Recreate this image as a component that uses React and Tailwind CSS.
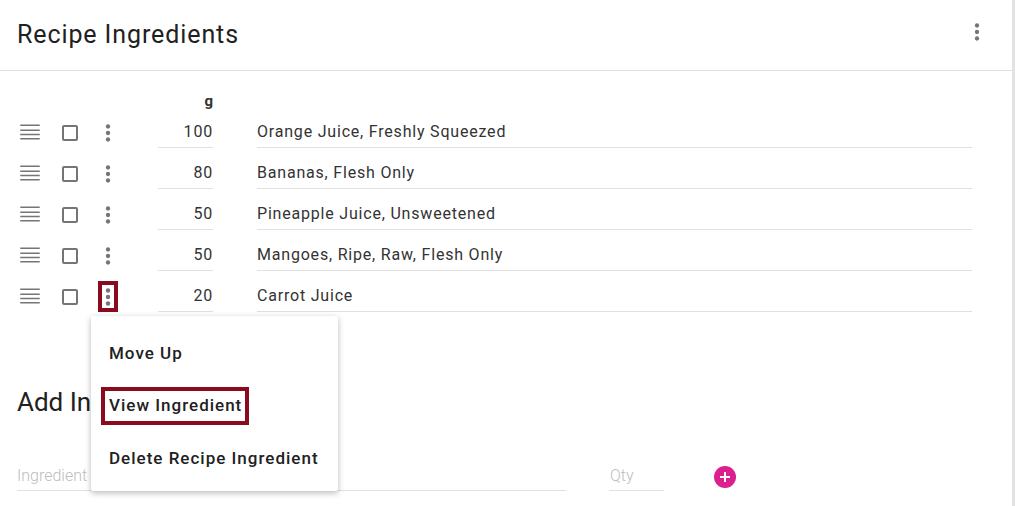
import React from "react";

const rows = [
  { qty: 100, name: "Orange Juice, Freshly Squeezed" },
  { qty: 80, name: "Bananas, Flesh Only" },
  { qty: 50, name: "Pineapple Juice, Unsweetened" },
  { qty: 50, name: "Mangoes, Ripe, Raw, Flesh Only" },
  { qty: 20, name: "Carrot Juice" },
];

const DragIcon = () => (
  <svg width="26" height="26" viewBox="0 0 24 24" fill="#757575">
    <path d="M3 15h18v-1.4H3V15zm0 4h18v-1.4H3V19zm0-8h18V9.6H3V11zm0-6v1.4h18V5H3z" />
  </svg>
);

const Kebab = () => (
  <svg width="26" height="26" viewBox="0 0 24 24" fill="#757575">
    <circle cx="12" cy="6" r="2" />
    <circle cx="12" cy="12" r="2" />
    <circle cx="12" cy="18" r="2" />
  </svg>
);

const Row = ({ qty, name, active }) => (
  <div className="flex h-[41px]">
    <div className="flex items-center pt-[8px]">
      <DragIcon />
    </div>
    <div className="ml-[19px] flex items-center pt-[10px]">
      <div className="h-4 w-4 rounded-[2px] border-2 border-[#757575]" />
    </div>
    <div className="ml-[17px] flex w-[26px] items-center justify-center pt-[10px]">
      {active ? (
        <div className="flex h-[31px] w-[20px] items-center justify-center border-4 border-[#8a0a1e]">
          <svg width="10" height="22" viewBox="0 0 10 22" fill="#757575">
            <circle cx="5" cy="4.5" r="2.2" />
            <circle cx="5" cy="11" r="2.2" />
            <circle cx="5" cy="17.5" r="2.2" />
          </svg>
        </div>
      ) : (
        <Kebab />
      )}
    </div>
    <div className="ml-[37px] flex w-[55px] items-center justify-end border-b border-[#e0e0e0] pt-[9px] text-[16px] leading-[20px] tracking-[0.8px] text-[#333]">
      {qty}
    </div>
    <div className="ml-[44px] flex w-[715px] items-center border-b border-[#e0e0e0] pt-[9px] text-[16px] leading-[20px] tracking-[0.8px] text-[#333]">
      {name}
    </div>
  </div>
);

const App = () => {
  return (
    <div
      className="relative h-[506px] w-[1015px] overflow-hidden bg-white"
      style={{ fontFamily: "Roboto, 'Noto Sans', sans-serif" }}
    >
      <div className="h-full w-[1015px] border-r-[3px] border-[#e2e2e2]">
        <div className="flex h-[71px] items-center justify-between border-b border-[#e0e0e0] pl-[17px] pr-[22px]">
          <h1 className="text-[25px] leading-[30px] tracking-[0.9px] text-[#212121]">
            Recipe Ingredients
          </h1>
          <div className="-mt-[6px]">
            <Kebab />
          </div>
        </div>

        <div className="px-[17px]">
          <div className="flex h-[36px]">
            <div className="ml-[141px] w-[55px] pt-[22px] text-right text-[15px] font-bold leading-[16px] text-[#333]">
              g
            </div>
          </div>
          {rows.map((r, i) => (
            <Row key={i} qty={r.qty} name={r.name} active={i === rows.length - 1} />
          ))}

          <h2 className="mt-[74px] text-[26px] leading-[32px] text-[#212121]">
            Add Ingredient
          </h2>

          <div className="mt-[44px] flex items-center">
            <div className="flex h-[29px] w-[549px] items-center border-b border-[#e0e0e0] text-[16px] font-light text-[#bdbdbd]">
              Ingredient
            </div>
            <div className="ml-[43px] flex h-[29px] w-[55px] items-center border-b border-[#e0e0e0] pl-[1px] text-[16px] font-light text-[#bdbdbd]">
              Qty
            </div>
            <div className="ml-[50px] flex h-[22px] w-[22px] items-center justify-center rounded-full bg-[#dc1f8e]">
              <svg width="12" height="12" viewBox="0 0 12 12">
                <path d="M6 1v10M1 6h10" stroke="white" strokeWidth="2" />
              </svg>
            </div>
          </div>
        </div>
      </div>

      <div className="absolute left-[91px] top-[316px] h-[175px] w-[247px] rounded-[2px] bg-white pt-[11px] shadow-[0_2px_6px_rgba(0,0,0,0.28)]">
        <div className="flex h-[52.5px] items-center px-[18px] text-[17px] font-medium tracking-[1px] text-[#212121]">
          Move Up
        </div>
        <div className="flex h-[52.5px] items-center px-[18px] text-[17px] font-medium tracking-[1px] text-[#212121]">
          <span className="-ml-[8px] inline-flex h-[38px] items-center border-4 border-[#8a0a1e] pl-[4px] pr-[3px]">
            View Ingredient
          </span>
        </div>
        <div className="flex h-[52.5px] items-center px-[18px] text-[17px] font-medium tracking-[1px] text-[#212121]">
          Delete Recipe Ingredient
        </div>
      </div>
    </div>
  );
};

export default App;
